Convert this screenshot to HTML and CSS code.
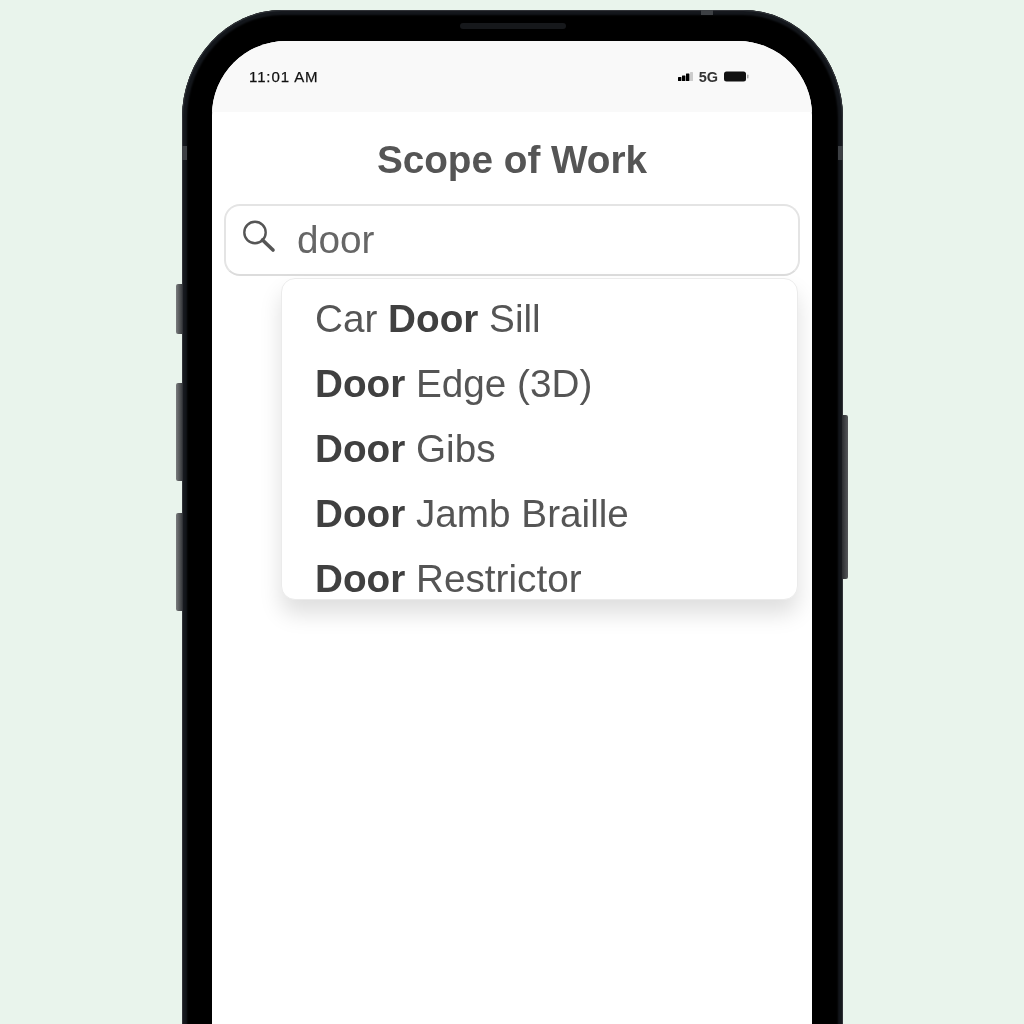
FILE: index.html
```html
<!DOCTYPE html>
<html lang="en">
<head>
<meta charset="utf-8">
<title>Scope of Work</title>
<link rel="stylesheet" href="styles.css">
</head>
<body>
<div class="phone">
  <span class="btn btn-silent"></span>
  <span class="btn btn-up"></span>
  <span class="btn btn-down"></span>
  <span class="btn btn-power"></span>
  <span class="band band-left"></span>
  <span class="band band-right"></span>
  <span class="band band-top"></span>
  <span class="speaker"></span>
  <div class="screen">
    <div class="status">
      <span class="time">11:01 AM</span>
      <div class="status-right">
        <svg class="signal" width="15" height="9" viewBox="0 0 15 9"><rect x="0" y="5" width="3.400" height="4" rx=".5" fill="#000"/><rect x="4" y="3.500" width="3.400" height="5.500" rx=".5" fill="#000"/><rect x="8" y="1.500" width="3.400" height="7.500" rx=".5" fill="#000"/><rect x="12" y="0" width="3" height="9" rx=".5" fill="#ccc"/></svg>
        <span class="net">5G</span>
        <svg class="battery" width="25" height="11" viewBox="0 0 25 11"><rect x="0" y="0.500" width="22" height="10" rx="2.500" fill="#111"/><rect x="23" y="3.500" width="1.500" height="4" rx=".7" fill="#aaa"/></svg>
      </div>
    </div>
    <div class="content">
      <h1 class="title">Scope of Work</h1>
      <div class="search">
        <svg class="search-icon" width="34" height="34" viewBox="0 0 34 34" fill="none" stroke="#555" stroke-linecap="round"><circle cx="13" cy="12.500" r="10.700" stroke-width="2.400"/><path d="M20.500 20 L31 30" stroke-width="3.600"/></svg>
        <span class="query">door</span>
      </div>
      <div class="dropdown">
        <div class="item">Car <b>Door</b> Sill</div>
        <div class="item"><b>Door</b> Edge (3D)</div>
        <div class="item"><b>Door</b> Gibs</div>
        <div class="item"><b>Door</b> Jamb Braille</div>
        <div class="item"><b>Door</b> Restrictor</div>
      </div>
    </div>
  </div>
</div>
</body>
</html>
```
FILE: styles.css
```css
* { box-sizing: border-box; }
html, body { margin: 0; height: 100%; }
body {
  background: #e9f4ec;
  overflow: hidden;
  font-family: "Liberation Sans", Arial, sans-serif;
}
.phone {
  position: relative;
  width: 661px;
  height: 1100px;
  margin: 10px 0 0 181.5px;
  padding: 31px 30.5px 0;
  background: #000;
  border-radius: 100px 100px 0 0 / 108px 108px 0 0;
  box-shadow: inset 0 0 1px 1px #33363b, inset 0 0 2px 5px #14171c;
}
.btn {
  position: absolute;
  width: 6px;
  background: linear-gradient(90deg, #7a7c7e, #3a3c3f);
  border-radius: 2px 0 0 2px;
  left: -5.5px;
}
.btn-silent { top: 274px; height: 50px; }
.btn-up { top: 373px; height: 98px; }
.btn-down { top: 503px; height: 98px; }
.btn-power { left: auto; right: -5.5px; top: 405px; height: 164px; border-radius: 0 2px 2px 0; background: linear-gradient(90deg, #2a2c2f, #55575a); }
.band { position: absolute; background: #3d4044; }
.band-left { left: 0; top: 136px; width: 5px; height: 14px; }
.band-right { right: 0; top: 136px; width: 5px; height: 14px; }
.band-top { left: 519px; top: 0; width: 12px; height: 5px; }
.speaker {
  position: absolute;
  top: 13px;
  left: 278px;
  width: 106px;
  height: 6px;
  border-radius: 3px;
  background: #16181b;
}
.screen {
  height: 100%;
  width: 600px;
  background: #fff;
  border-radius: 74px 74px 0 0;
  overflow: hidden;
}
.status {
  height: 71px;
  background: #f9f9f9;
  display: flex;
  justify-content: space-between;
  align-items: center;
  padding: 0 63px 0 37px;
  filter: blur(.4px);
}
.time { font-size: 15px; letter-spacing: .9px; color: #111; -webkit-text-stroke: .25px #111; }
.status-right { display: flex; align-items: center; gap: 6px; }
.net { font-size: 14.500px; font-weight: bold; color: #333; }
.content { position: relative; padding: 0 12px; filter: blur(.7px); }
.title {
  margin: 0;
  padding-top: 24px;
  height: 92px;
  font-size: 38.700px;
  line-height: 48px;
  font-weight: bold;
  text-align: center;
  color: #555;
}
.search {
  display: flex;
  align-items: center;
  width: 576px;
  height: 72px;
  padding: 0 0 0 16px;
  gap: 21px;
  background: #fff;
  border: 2px solid #e4e4e4;
  border-bottom-color: #dcdcdc;
  border-radius: 16px;
}
.search-icon { flex: none; margin-top: -6px; }
.query { font-size: 38.700px; color: #666; }
.dropdown {
  position: absolute;
  top: 166px;
  left: 69px;
  width: 517px;
  height: 322px;
  padding: 7px 33px 0;
  background: #fff;
  border: 1px solid #ebebeb;
  border-radius: 14px;
  overflow: hidden;
  box-shadow: 0 14px 22px rgba(0, 0, 0, .13);
}
.item {
  height: 65px;
  line-height: 65px;
  font-size: 38.700px;
  color: #555;
  white-space: nowrap;
}
.item b { color: #404040; }
```
